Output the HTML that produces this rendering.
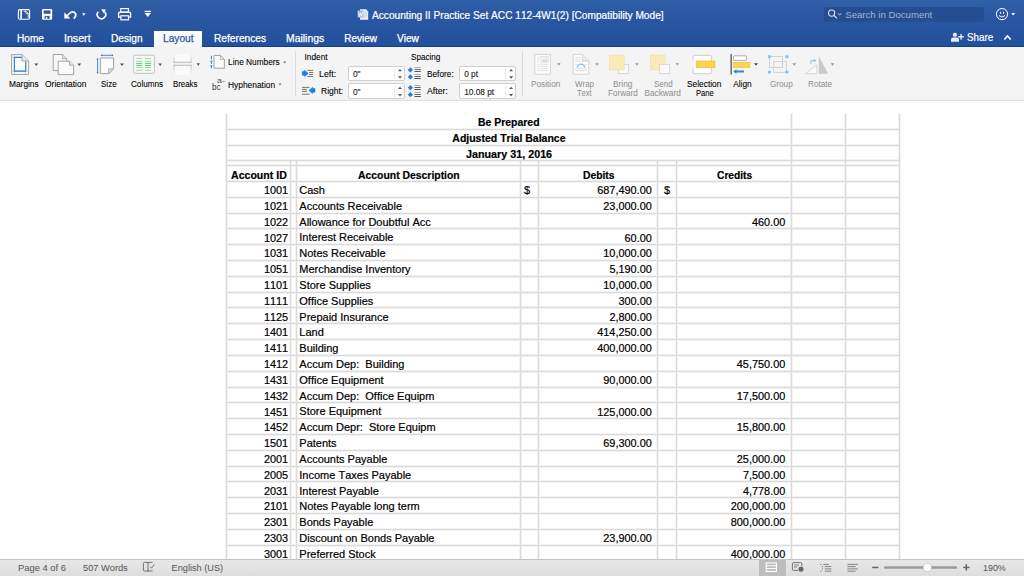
<!DOCTYPE html>
<html><head><meta charset="utf-8"><style>
html,body{margin:0;padding:0;}
body{width:1024px;height:576px;overflow:hidden;position:relative;background:#fff;font-family:"Liberation Sans",sans-serif;}
.t{position:absolute;white-space:nowrap;font-family:"Liberation Sans",sans-serif;font-kerning:none;}
.d{-webkit-text-stroke:0.2px #000;}
.rl{-webkit-text-stroke:0.08px currentColor;}
.r{position:absolute;}
svg{position:absolute;overflow:visible;}
</style></head><body>
<div class="r" style="left:0px;top:0px;width:1024px;height:47px;background:linear-gradient(#3060a8,#2a58a2 30%,#22509c);"></div>
<div class="r" style="left:0px;top:46px;width:1024px;height:1px;background:#123f8c;"></div>
<div class="r" style="left:154.3px;top:30.5px;width:47.9px;height:17px;background:linear-gradient(#fdfdfd,#f4f4f4);"></div>
<div class="t " style="left:372.40px;top:10.53px;font-size:10.0px;line-height:10.0px;color:#fff;transform:scaleX(1.0149);transform-origin:0 0;-webkit-text-stroke:0.2px #fff;">Accounting II Practice Set ACC 112-4W1(2) [Compatibility Mode]</div>
<div class="t " style="left:16.60px;top:33.73px;font-size:10px;line-height:10px;color:#fff;transform:scaleX(1.0085);transform-origin:0 0;-webkit-text-stroke:0.25px #fff;">Home</div>
<div class="t " style="left:63.70px;top:33.73px;font-size:10px;line-height:10px;color:#fff;transform:scaleX(1.0637);transform-origin:0 0;-webkit-text-stroke:0.25px #fff;">Insert</div>
<div class="t " style="left:111.20px;top:33.73px;font-size:10px;line-height:10px;color:#fff;transform:scaleX(1.0152);transform-origin:0 0;-webkit-text-stroke:0.25px #fff;">Design</div>
<div class="t " style="left:213.50px;top:33.73px;font-size:10px;line-height:10px;color:#fff;transform:scaleX(1.0189);transform-origin:0 0;-webkit-text-stroke:0.25px #fff;">References</div>
<div class="t " style="left:285.50px;top:33.73px;font-size:10px;line-height:10px;color:#fff;transform:scaleX(1.0415);transform-origin:0 0;-webkit-text-stroke:0.25px #fff;">Mailings</div>
<div class="t " style="left:344.20px;top:33.73px;font-size:10px;line-height:10px;color:#fff;-webkit-text-stroke:0.25px #fff;">Review</div>
<div class="t " style="left:397.00px;top:33.73px;font-size:10px;line-height:10px;color:#fff;transform:scaleX(1.0104);transform-origin:0 0;-webkit-text-stroke:0.25px #fff;">View</div>
<div class="t " style="left:162.70px;top:33.73px;font-size:10px;line-height:10px;color:#2b5aa6;transform:scaleX(1.0159);transform-origin:0 0;-webkit-text-stroke:0.25px #2b5aa6;">Layout</div>
<div class="t " style="left:967.40px;top:33.18px;font-size:10.3px;line-height:10.3px;color:#fff;transform:scaleX(0.9533);transform-origin:0 0;-webkit-text-stroke:0.2px #fff;">Share</div>
<div class="r" style="left:824px;top:7px;width:160px;height:15px;background:#244d92;border-radius:3px;"></div>
<div class="t " style="left:845.30px;top:10.07px;font-size:9.6px;line-height:9.6px;color:#a3b4d2;">Search in Document</div>
<div class="r" style="left:0px;top:47px;width:1024px;height:54px;background:#f4f4f4;"></div>
<div class="r" style="left:0px;top:99px;width:1024px;height:1px;background:#f1f1f1;"></div>
<div class="r" style="left:0px;top:100px;width:1024px;height:1px;background:#e0e0e0;"></div>
<div class="r" style="left:295px;top:51px;width:1px;height:45px;background:#dcdcdc;"></div>
<div class="r" style="left:522px;top:51px;width:1px;height:45px;background:#dcdcdc;"></div>
<div class="t rl" style="left:8.60px;top:79.97px;font-size:8.3px;line-height:8.3px;color:#000;transform:scaleX(1.0062);transform-origin:0 0;">Margins</div>
<div class="t rl" style="left:45.30px;top:79.97px;font-size:8.3px;line-height:8.3px;color:#000;transform:scaleX(1.0198);transform-origin:0 0;">Orientation</div>
<div class="t rl" style="left:100.60px;top:79.97px;font-size:8.3px;line-height:8.3px;color:#000;transform:scaleX(0.9662);transform-origin:0 0;">Size</div>
<div class="t rl" style="left:130.90px;top:79.97px;font-size:8.3px;line-height:8.3px;color:#000;transform:scaleX(0.9802);transform-origin:0 0;">Columns</div>
<div class="t rl" style="left:172.90px;top:79.97px;font-size:8.3px;line-height:8.3px;color:#000;transform:scaleX(0.9485);transform-origin:0 0;">Breaks</div>
<div class="t rl" style="left:228.10px;top:57.97px;font-size:8.3px;line-height:8.3px;color:#000;">Line Numbers</div>
<div class="t rl" style="left:228.10px;top:81.27px;font-size:8.3px;line-height:8.3px;color:#000;transform:scaleX(1.0107);transform-origin:0 0;">Hyphenation</div>
<div class="t rl" style="left:304.50px;top:52.77px;font-size:8.3px;line-height:8.3px;color:#000;">Indent</div>
<div class="t rl" style="left:410.70px;top:52.77px;font-size:8.3px;line-height:8.3px;color:#000;transform:scaleX(0.9769);transform-origin:0 0;">Spacing</div>
<div class="t rl" style="left:319.30px;top:70.32px;font-size:8.6px;line-height:8.6px;color:#000;transform:scaleX(1.0220);transform-origin:0 0;">Left:</div>
<div class="t rl" style="left:320.50px;top:87.12px;font-size:8.6px;line-height:8.6px;color:#000;transform:scaleX(0.9882);transform-origin:0 0;">Right:</div>
<div class="t rl" style="left:426.60px;top:70.32px;font-size:8.6px;line-height:8.6px;color:#000;transform:scaleX(0.9630);transform-origin:0 0;">Before:</div>
<div class="t rl" style="left:426.60px;top:87.12px;font-size:8.6px;line-height:8.6px;color:#000;transform:scaleX(1.0170);transform-origin:0 0;">After:</div>
<div class="t " style="left:530.90px;top:79.97px;font-size:8.3px;line-height:8.3px;color:#8c8c8c;">Position</div>
<div class="t " style="left:574.50px;top:79.97px;font-size:8.3px;line-height:8.3px;color:#8c8c8c;transform:scaleX(0.9582);transform-origin:0 0;">Wrap</div>
<div class="t " style="left:577.00px;top:88.77px;font-size:8.3px;line-height:8.3px;color:#8c8c8c;transform:scaleX(0.9107);transform-origin:0 0;">Text</div>
<div class="t " style="left:612.60px;top:79.97px;font-size:8.3px;line-height:8.3px;color:#8c8c8c;transform:scaleX(1.0064);transform-origin:0 0;">Bring</div>
<div class="t " style="left:607.50px;top:88.77px;font-size:8.3px;line-height:8.3px;color:#8c8c8c;transform:scaleX(0.9758);transform-origin:0 0;">Forward</div>
<div class="t " style="left:653.60px;top:79.97px;font-size:8.3px;line-height:8.3px;color:#8c8c8c;transform:scaleX(0.9596);transform-origin:0 0;">Send</div>
<div class="t " style="left:644.40px;top:88.77px;font-size:8.3px;line-height:8.3px;color:#8c8c8c;">Backward</div>
<div class="t rl" style="left:686.80px;top:79.97px;font-size:8.3px;line-height:8.3px;color:#000;transform:scaleX(1.0075);transform-origin:0 0;">Selection</div>
<div class="t rl" style="left:695.50px;top:88.77px;font-size:8.3px;line-height:8.3px;color:#000;transform:scaleX(0.9183);transform-origin:0 0;">Pane</div>
<div class="t rl" style="left:733.20px;top:79.97px;font-size:8.3px;line-height:8.3px;color:#000;">Align</div>
<div class="t " style="left:770.00px;top:79.97px;font-size:8.3px;line-height:8.3px;color:#8c8c8c;transform:scaleX(0.9841);transform-origin:0 0;">Group</div>
<div class="t " style="left:807.50px;top:79.97px;font-size:8.3px;line-height:8.3px;color:#8c8c8c;transform:scaleX(0.9856);transform-origin:0 0;">Rotate</div>
<div class="r" style="left:348px;top:65.6px;width:57.30000000000001px;height:15.900000000000006px;background:#fff;border:1px solid #cfcfcf;box-sizing:border-box;border-radius:2px;"></div>
<div class="t rl" style="left:353.00px;top:70.17px;font-size:8.3px;line-height:8.3px;color:#111;">0"</div>
<div class="r" style="left:348px;top:83.4px;width:57.30000000000001px;height:15.199999999999989px;background:#fff;border:1px solid #cfcfcf;box-sizing:border-box;border-radius:2px;"></div>
<div class="t rl" style="left:353.00px;top:87.97px;font-size:8.3px;line-height:8.3px;color:#111;">0"</div>
<div class="r" style="left:459.2px;top:65.6px;width:57.00000000000006px;height:15.900000000000006px;background:#fff;border:1px solid #cfcfcf;box-sizing:border-box;border-radius:2px;"></div>
<div class="t rl" style="left:464.20px;top:70.17px;font-size:8.3px;line-height:8.3px;color:#111;">0 pt</div>
<div class="r" style="left:459.2px;top:83.4px;width:57.00000000000006px;height:15.199999999999989px;background:#fff;border:1px solid #cfcfcf;box-sizing:border-box;border-radius:2px;"></div>
<div class="t rl" style="left:464.20px;top:87.97px;font-size:8.3px;line-height:8.3px;color:#111;">10.08 pt</div>
<div class="r" style="left:225px;top:128px;width:676px;height:3px;background:#f3f3f3;"></div>
<div class="r" style="left:225px;top:144px;width:676px;height:3px;background:#f3f3f3;"></div>
<div class="r" style="left:225px;top:159px;width:676px;height:3px;background:#f3f3f3;"></div>
<div class="r" style="left:225px;top:164px;width:676px;height:3px;background:#f3f3f3;"></div>
<div class="r" style="left:225px;top:180px;width:676px;height:3px;background:#f3f3f3;"></div>
<div class="r" style="left:225px;top:196px;width:676px;height:3px;background:#f3f3f3;"></div>
<div class="r" style="left:225px;top:212px;width:676px;height:3px;background:#f3f3f3;"></div>
<div class="r" style="left:225px;top:227px;width:676px;height:3px;background:#f3f3f3;"></div>
<div class="r" style="left:225px;top:243px;width:676px;height:3px;background:#f3f3f3;"></div>
<div class="r" style="left:225px;top:259px;width:676px;height:3px;background:#f3f3f3;"></div>
<div class="r" style="left:225px;top:275px;width:676px;height:3px;background:#f3f3f3;"></div>
<div class="r" style="left:225px;top:291px;width:676px;height:3px;background:#f3f3f3;"></div>
<div class="r" style="left:225px;top:306px;width:676px;height:3px;background:#f3f3f3;"></div>
<div class="r" style="left:225px;top:322px;width:676px;height:3px;background:#f3f3f3;"></div>
<div class="r" style="left:225px;top:338px;width:676px;height:3px;background:#f3f3f3;"></div>
<div class="r" style="left:225px;top:354px;width:676px;height:3px;background:#f3f3f3;"></div>
<div class="r" style="left:225px;top:370px;width:676px;height:3px;background:#f3f3f3;"></div>
<div class="r" style="left:225px;top:386px;width:676px;height:3px;background:#f3f3f3;"></div>
<div class="r" style="left:225px;top:401px;width:676px;height:3px;background:#f3f3f3;"></div>
<div class="r" style="left:225px;top:417px;width:676px;height:3px;background:#f3f3f3;"></div>
<div class="r" style="left:225px;top:433px;width:676px;height:3px;background:#f3f3f3;"></div>
<div class="r" style="left:225px;top:449px;width:676px;height:3px;background:#f3f3f3;"></div>
<div class="r" style="left:225px;top:465px;width:676px;height:3px;background:#f3f3f3;"></div>
<div class="r" style="left:225px;top:480px;width:676px;height:3px;background:#f3f3f3;"></div>
<div class="r" style="left:225px;top:496px;width:676px;height:3px;background:#f3f3f3;"></div>
<div class="r" style="left:225px;top:512px;width:676px;height:3px;background:#f3f3f3;"></div>
<div class="r" style="left:225px;top:528px;width:676px;height:3px;background:#f3f3f3;"></div>
<div class="r" style="left:225px;top:544px;width:676px;height:3px;background:#f3f3f3;"></div>
<div class="r" style="left:225px;top:113px;width:3px;height:447px;background:#f3f3f3;"></div>
<div class="r" style="left:790px;top:113px;width:3px;height:447px;background:#f3f3f3;"></div>
<div class="r" style="left:844px;top:113px;width:3px;height:447px;background:#f3f3f3;"></div>
<div class="r" style="left:898px;top:113px;width:3px;height:447px;background:#f3f3f3;"></div>
<div class="r" style="left:289px;top:159px;width:3px;height:401px;background:#f3f3f3;"></div>
<div class="r" style="left:295px;top:159px;width:3px;height:401px;background:#f3f3f3;"></div>
<div class="r" style="left:519px;top:159px;width:3px;height:401px;background:#f3f3f3;"></div>
<div class="r" style="left:537px;top:159px;width:3px;height:401px;background:#f3f3f3;"></div>
<div class="r" style="left:656px;top:159px;width:3px;height:401px;background:#f3f3f3;"></div>
<div class="r" style="left:675px;top:159px;width:3px;height:401px;background:#f3f3f3;"></div>
<div class="r" style="left:226px;top:129px;width:674px;height:1px;background:#dadada;"></div>
<div class="r" style="left:226px;top:145px;width:674px;height:1px;background:#dadada;"></div>
<div class="r" style="left:226px;top:160px;width:674px;height:1px;background:#dadada;"></div>
<div class="r" style="left:226px;top:165px;width:674px;height:1px;background:#dadada;"></div>
<div class="r" style="left:226px;top:181px;width:674px;height:1px;background:#dadada;"></div>
<div class="r" style="left:226px;top:197px;width:674px;height:1px;background:#dadada;"></div>
<div class="r" style="left:226px;top:213px;width:674px;height:1px;background:#dadada;"></div>
<div class="r" style="left:226px;top:228px;width:674px;height:1px;background:#dadada;"></div>
<div class="r" style="left:226px;top:244px;width:674px;height:1px;background:#dadada;"></div>
<div class="r" style="left:226px;top:260px;width:674px;height:1px;background:#dadada;"></div>
<div class="r" style="left:226px;top:276px;width:674px;height:1px;background:#dadada;"></div>
<div class="r" style="left:226px;top:292px;width:674px;height:1px;background:#dadada;"></div>
<div class="r" style="left:226px;top:307px;width:674px;height:1px;background:#dadada;"></div>
<div class="r" style="left:226px;top:323px;width:674px;height:1px;background:#dadada;"></div>
<div class="r" style="left:226px;top:339px;width:674px;height:1px;background:#dadada;"></div>
<div class="r" style="left:226px;top:355px;width:674px;height:1px;background:#dadada;"></div>
<div class="r" style="left:226px;top:371px;width:674px;height:1px;background:#dadada;"></div>
<div class="r" style="left:226px;top:387px;width:674px;height:1px;background:#dadada;"></div>
<div class="r" style="left:226px;top:402px;width:674px;height:1px;background:#dadada;"></div>
<div class="r" style="left:226px;top:418px;width:674px;height:1px;background:#dadada;"></div>
<div class="r" style="left:226px;top:434px;width:674px;height:1px;background:#dadada;"></div>
<div class="r" style="left:226px;top:450px;width:674px;height:1px;background:#dadada;"></div>
<div class="r" style="left:226px;top:466px;width:674px;height:1px;background:#dadada;"></div>
<div class="r" style="left:226px;top:481px;width:674px;height:1px;background:#dadada;"></div>
<div class="r" style="left:226px;top:497px;width:674px;height:1px;background:#dadada;"></div>
<div class="r" style="left:226px;top:513px;width:674px;height:1px;background:#dadada;"></div>
<div class="r" style="left:226px;top:529px;width:674px;height:1px;background:#dadada;"></div>
<div class="r" style="left:226px;top:545px;width:674px;height:1px;background:#dadada;"></div>
<div class="r" style="left:226px;top:114px;width:1px;height:446px;background:#dadada;"></div>
<div class="r" style="left:791px;top:114px;width:1px;height:446px;background:#dadada;"></div>
<div class="r" style="left:845px;top:114px;width:1px;height:446px;background:#dadada;"></div>
<div class="r" style="left:899px;top:114px;width:1px;height:446px;background:#dadada;"></div>
<div class="r" style="left:290px;top:160px;width:1px;height:400px;background:#dadada;"></div>
<div class="r" style="left:296px;top:160px;width:1px;height:400px;background:#dadada;"></div>
<div class="r" style="left:520px;top:160px;width:1px;height:400px;background:#dadada;"></div>
<div class="r" style="left:538px;top:160px;width:1px;height:400px;background:#dadada;"></div>
<div class="r" style="left:657px;top:160px;width:1px;height:400px;background:#dadada;"></div>
<div class="r" style="left:676px;top:160px;width:1px;height:400px;background:#dadada;"></div>
<div class="t d" style="left:478.25px;top:117.11px;font-size:10.5px;line-height:10.5px;color:#000;font-weight:bold;transform:scaleX(0.9942);transform-origin:0 0;">Be Prepared</div>
<div class="t d" style="left:452.30px;top:133.01px;font-size:10.5px;line-height:10.5px;color:#000;font-weight:bold;">Adjusted Trial Balance</div>
<div class="t d" style="left:465.95px;top:148.71px;font-size:10.5px;line-height:10.5px;color:#000;font-weight:bold;transform:scaleX(1.0243);transform-origin:0 0;">January 31, 2016</div>
<div class="t d" style="left:230.50px;top:169.71px;font-size:10.5px;line-height:10.5px;color:#000;font-weight:bold;transform:scaleX(1.0070);transform-origin:0 0;">Account ID</div>
<div class="t d" style="left:357.90px;top:169.71px;font-size:10.5px;line-height:10.5px;color:#000;font-weight:bold;transform:scaleX(0.9905);transform-origin:0 0;">Account Description</div>
<div class="t d" style="left:583.25px;top:169.71px;font-size:10.5px;line-height:10.5px;color:#000;font-weight:bold;transform:scaleX(0.9817);transform-origin:0 0;">Debits</div>
<div class="t d" style="left:716.60px;top:169.71px;font-size:10.5px;line-height:10.5px;color:#000;font-weight:bold;transform:scaleX(0.9731);transform-origin:0 0;">Credits</div>
<div class="t d" style="left:263.95px;top:185.09px;font-size:10.9px;line-height:10.9px;color:#000;">1001</div>
<div class="t d" style="left:299.30px;top:185.00px;font-size:11.0px;line-height:11.0px;color:#000;">Cash</div>
<div class="t d" style="left:597.25px;top:185.09px;font-size:10.9px;line-height:10.9px;color:#000;">687,490.00</div>
<div class="t d" style="left:263.95px;top:200.91px;font-size:10.9px;line-height:10.9px;color:#000;">1021</div>
<div class="t d" style="left:299.30px;top:200.82px;font-size:11.0px;line-height:11.0px;color:#000;">Accounts Receivable</div>
<div class="t d" style="left:603.31px;top:200.91px;font-size:10.9px;line-height:10.9px;color:#000;">23,000.00</div>
<div class="t d" style="left:263.95px;top:216.73px;font-size:10.9px;line-height:10.9px;color:#000;">1022</div>
<div class="t d" style="left:299.30px;top:216.64px;font-size:11.0px;line-height:11.0px;color:#000;">Allowance for Doubtful Acc</div>
<div class="t d" style="left:751.96px;top:216.73px;font-size:10.9px;line-height:10.9px;color:#000;">460.00</div>
<div class="t d" style="left:263.95px;top:232.55px;font-size:10.9px;line-height:10.9px;color:#000;">1027</div>
<div class="t d" style="left:299.30px;top:232.46px;font-size:11.0px;line-height:11.0px;color:#000;">Interest Receivable</div>
<div class="t d" style="left:624.53px;top:232.55px;font-size:10.9px;line-height:10.9px;color:#000;">60.00</div>
<div class="t d" style="left:263.95px;top:248.37px;font-size:10.9px;line-height:10.9px;color:#000;">1031</div>
<div class="t d" style="left:299.30px;top:248.28px;font-size:11.0px;line-height:11.0px;color:#000;">Notes Receivable</div>
<div class="t d" style="left:603.31px;top:248.37px;font-size:10.9px;line-height:10.9px;color:#000;">10,000.00</div>
<div class="t d" style="left:263.95px;top:264.19px;font-size:10.9px;line-height:10.9px;color:#000;">1051</div>
<div class="t d" style="left:299.30px;top:264.10px;font-size:11.0px;line-height:11.0px;color:#000;">Merchandise Inventory</div>
<div class="t d" style="left:609.38px;top:264.19px;font-size:10.9px;line-height:10.9px;color:#000;">5,190.00</div>
<div class="t d" style="left:263.95px;top:280.01px;font-size:10.9px;line-height:10.9px;color:#000;">1101</div>
<div class="t d" style="left:299.30px;top:279.92px;font-size:11.0px;line-height:11.0px;color:#000;">Store Supplies</div>
<div class="t d" style="left:603.31px;top:280.01px;font-size:10.9px;line-height:10.9px;color:#000;">10,000.00</div>
<div class="t d" style="left:263.95px;top:295.83px;font-size:10.9px;line-height:10.9px;color:#000;">1111</div>
<div class="t d" style="left:299.30px;top:295.74px;font-size:11.0px;line-height:11.0px;color:#000;">Office Supplies</div>
<div class="t d" style="left:618.46px;top:295.83px;font-size:10.9px;line-height:10.9px;color:#000;">300.00</div>
<div class="t d" style="left:263.95px;top:311.65px;font-size:10.9px;line-height:10.9px;color:#000;">1125</div>
<div class="t d" style="left:299.30px;top:311.56px;font-size:11.0px;line-height:11.0px;color:#000;">Prepaid Insurance</div>
<div class="t d" style="left:609.38px;top:311.65px;font-size:10.9px;line-height:10.9px;color:#000;">2,800.00</div>
<div class="t d" style="left:263.95px;top:327.47px;font-size:10.9px;line-height:10.9px;color:#000;">1401</div>
<div class="t d" style="left:299.30px;top:327.38px;font-size:11.0px;line-height:11.0px;color:#000;">Land</div>
<div class="t d" style="left:597.25px;top:327.47px;font-size:10.9px;line-height:10.9px;color:#000;">414,250.00</div>
<div class="t d" style="left:263.95px;top:343.29px;font-size:10.9px;line-height:10.9px;color:#000;">1411</div>
<div class="t d" style="left:299.30px;top:343.20px;font-size:11.0px;line-height:11.0px;color:#000;">Building</div>
<div class="t d" style="left:597.25px;top:343.29px;font-size:10.9px;line-height:10.9px;color:#000;">400,000.00</div>
<div class="t d" style="left:263.95px;top:359.11px;font-size:10.9px;line-height:10.9px;color:#000;">1412</div>
<div class="t d" style="left:299.30px;top:359.02px;font-size:11.0px;line-height:11.0px;color:#000;">Accum Dep: &nbsp;Building</div>
<div class="t d" style="left:736.81px;top:359.11px;font-size:10.9px;line-height:10.9px;color:#000;">45,750.00</div>
<div class="t d" style="left:263.95px;top:374.93px;font-size:10.9px;line-height:10.9px;color:#000;">1431</div>
<div class="t d" style="left:299.30px;top:374.84px;font-size:11.0px;line-height:11.0px;color:#000;">Office Equipment</div>
<div class="t d" style="left:603.31px;top:374.93px;font-size:10.9px;line-height:10.9px;color:#000;">90,000.00</div>
<div class="t d" style="left:263.95px;top:390.75px;font-size:10.9px;line-height:10.9px;color:#000;">1432</div>
<div class="t d" style="left:299.30px;top:390.66px;font-size:11.0px;line-height:11.0px;color:#000;">Accum Dep: &nbsp;Office Equipm</div>
<div class="t d" style="left:736.81px;top:390.75px;font-size:10.9px;line-height:10.9px;color:#000;">17,500.00</div>
<div class="t d" style="left:263.95px;top:406.57px;font-size:10.9px;line-height:10.9px;color:#000;">1451</div>
<div class="t d" style="left:299.30px;top:406.48px;font-size:11.0px;line-height:11.0px;color:#000;">Store Equipment</div>
<div class="t d" style="left:597.25px;top:406.57px;font-size:10.9px;line-height:10.9px;color:#000;">125,000.00</div>
<div class="t d" style="left:263.95px;top:422.39px;font-size:10.9px;line-height:10.9px;color:#000;">1452</div>
<div class="t d" style="left:299.30px;top:422.30px;font-size:11.0px;line-height:11.0px;color:#000;">Accum Depr: &nbsp;Store Equipm</div>
<div class="t d" style="left:736.81px;top:422.39px;font-size:10.9px;line-height:10.9px;color:#000;">15,800.00</div>
<div class="t d" style="left:263.95px;top:438.21px;font-size:10.9px;line-height:10.9px;color:#000;">1501</div>
<div class="t d" style="left:299.30px;top:438.12px;font-size:11.0px;line-height:11.0px;color:#000;">Patents</div>
<div class="t d" style="left:603.31px;top:438.21px;font-size:10.9px;line-height:10.9px;color:#000;">69,300.00</div>
<div class="t d" style="left:263.95px;top:454.03px;font-size:10.9px;line-height:10.9px;color:#000;">2001</div>
<div class="t d" style="left:299.30px;top:453.94px;font-size:11.0px;line-height:11.0px;color:#000;">Accounts Payable</div>
<div class="t d" style="left:736.81px;top:454.03px;font-size:10.9px;line-height:10.9px;color:#000;">25,000.00</div>
<div class="t d" style="left:263.95px;top:469.85px;font-size:10.9px;line-height:10.9px;color:#000;">2005</div>
<div class="t d" style="left:299.30px;top:469.76px;font-size:11.0px;line-height:11.0px;color:#000;">Income Taxes Payable</div>
<div class="t d" style="left:742.88px;top:469.85px;font-size:10.9px;line-height:10.9px;color:#000;">7,500.00</div>
<div class="t d" style="left:263.95px;top:485.67px;font-size:10.9px;line-height:10.9px;color:#000;">2031</div>
<div class="t d" style="left:299.30px;top:485.58px;font-size:11.0px;line-height:11.0px;color:#000;">Interest Payable</div>
<div class="t d" style="left:742.88px;top:485.67px;font-size:10.9px;line-height:10.9px;color:#000;">4,778.00</div>
<div class="t d" style="left:263.95px;top:501.49px;font-size:10.9px;line-height:10.9px;color:#000;">2101</div>
<div class="t d" style="left:299.30px;top:501.40px;font-size:11.0px;line-height:11.0px;color:#000;">Notes Payable long term</div>
<div class="t d" style="left:730.75px;top:501.49px;font-size:10.9px;line-height:10.9px;color:#000;">200,000.00</div>
<div class="t d" style="left:263.95px;top:517.31px;font-size:10.9px;line-height:10.9px;color:#000;">2301</div>
<div class="t d" style="left:299.30px;top:517.22px;font-size:11.0px;line-height:11.0px;color:#000;">Bonds Payable</div>
<div class="t d" style="left:730.75px;top:517.31px;font-size:10.9px;line-height:10.9px;color:#000;">800,000.00</div>
<div class="t d" style="left:263.95px;top:533.13px;font-size:10.9px;line-height:10.9px;color:#000;">2303</div>
<div class="t d" style="left:299.30px;top:533.04px;font-size:11.0px;line-height:11.0px;color:#000;">Discount on Bonds Payable</div>
<div class="t d" style="left:603.31px;top:533.13px;font-size:10.9px;line-height:10.9px;color:#000;">23,900.00</div>
<div class="t d" style="left:263.95px;top:548.95px;font-size:10.9px;line-height:10.9px;color:#000;">3001</div>
<div class="t d" style="left:299.30px;top:548.86px;font-size:11.0px;line-height:11.0px;color:#000;">Preferred Stock</div>
<div class="t d" style="left:730.75px;top:548.95px;font-size:10.9px;line-height:10.9px;color:#000;">400,000.00</div>
<div class="t d" style="left:524.00px;top:185.09px;font-size:10.9px;line-height:10.9px;color:#000;">$</div>
<div class="t d" style="left:664.00px;top:185.09px;font-size:10.9px;line-height:10.9px;color:#000;">$</div>
<div class="r" style="left:0px;top:559px;width:1024px;height:17px;background:linear-gradient(#e8e8e8,#dedede);"></div>
<div class="r" style="left:0px;top:559px;width:1024px;height:1px;background:#c2c2c2;"></div>
<div class="t " style="left:18.30px;top:563.81px;font-size:9.2px;line-height:9.2px;color:#555;transform:scaleX(1.0222);transform-origin:0 0;">Page 4 of 6</div>
<div class="t " style="left:83.00px;top:563.81px;font-size:9.2px;line-height:9.2px;color:#555;transform:scaleX(1.0071);transform-origin:0 0;">507 Words</div>
<div class="t " style="left:171.60px;top:563.81px;font-size:9.2px;line-height:9.2px;color:#555;">English (US)</div>
<div class="t " style="left:982.60px;top:563.81px;font-size:9.2px;line-height:9.2px;color:#555;transform:scaleX(0.9690);transform-origin:0 0;">190%</div>
<div class="r" style="left:758.5px;top:560px;width:27.2px;height:16px;background:#bdbdbd;"></div>
<div class="t " style="left:216.90px;top:77.19px;font-size:7.8px;line-height:7.8px;color:#555;transform:scaleX(1.1248);transform-origin:0 0;">a-</div>
<div class="t " style="left:211.70px;top:83.22px;font-size:9.3px;line-height:9.3px;color:#333;transform:scaleX(0.8654);transform-origin:0 0;">bc</div>
<svg style="left:0;top:0" width="1024" height="576" viewBox="0 0 1024 576"><rect x="18.4" y="9.6" width="11.2" height="9.6" rx="1.2" fill="none" stroke="#fff" stroke-width="1.1"/><rect x="20.3" y="10" width="1.7" height="8.8" fill="#fff"/><path d="M23.8 11.2 L26 11.2 L28.2 13.5 L28.2 17.8" fill="none" stroke="#fff" stroke-width="0.9"/><path d="M26 11.2 L26 13.5 L28.2 13.5" fill="none" stroke="#fff" stroke-width="0.7"/><rect x="42" y="9" width="10.2" height="10.7" rx="1.2" fill="#fff"/><rect x="43.7" y="10.4" width="6.8" height="3.4" fill="#2a58a2"/><rect x="44.6" y="15.9" width="5" height="3" fill="#2a58a2"/><rect x="45.8" y="16.8" width="1.5" height="2.1" fill="#fff"/><path d="M66.2 16.4 L70.5 12.6 Q73.6 10.8 75.4 13.4 Q76.6 16 74.2 18" fill="none" stroke="#fff" stroke-width="1.7" stroke-linecap="round"/><path d="M64.3 12.2 L64.3 18.4 L70.4 18.4 Z" fill="#fff"/><path d="M82 13.2 L85.6 13.2 L83.8 15.8 Z" fill="#fff"/><path d="M104.8 12 A4.2 4.2 0 1 1 98.3 11.8" fill="none" stroke="#fff" stroke-width="1.6"/><path d="M101.2 9.3 L105.8 9.5 L103.9 13.4 Z" fill="#fff"/><rect x="120.8" y="8.6" width="7.6" height="3.6" fill="none" stroke="#fff" stroke-width="1.2"/><path d="M120.6 17.2 L118.6 17.2 L118.6 13.6 Q118.6 12.2 120 12.2 L129.2 12.2 Q130.6 12.2 130.6 13.6 L130.6 17.2 L128.6 17.2" fill="none" stroke="#fff" stroke-width="1.3"/><rect x="120.9" y="15.8" width="7.6" height="4" fill="none" stroke="#fff" stroke-width="1.2"/><rect x="144.6" y="10.8" width="6.3" height="1.3" fill="#fff"/><path d="M144.6 13 L150.9 13 L147.75 16.9 Z" fill="#fff"/><path d="M360 9.2 L366 9.2 L368.2 11.4 L368.2 19.8 L360 19.8 Z" fill="#eef2f8"/><g stroke="#b9c6dc" stroke-width="0.7"><line x1="363.5" y1="12.2" x2="367.2" y2="12.2"/><line x1="363.5" y1="13.8" x2="367.2" y2="13.8"/><line x1="363.5" y1="15.4" x2="367.2" y2="15.4"/><line x1="363.5" y1="17" x2="367.2" y2="17"/></g><rect x="357.6" y="10.4" width="5.8" height="7.2" fill="#9fb4d8"/><path d="M358.3 11.6 L359.4 16.6 L360.5 12.8 L361.6 16.6 L362.7 11.6" fill="none" stroke="#fff" stroke-width="0.8"/><circle cx="831.6" cy="13.1" r="3.1" fill="none" stroke="#d9e1ee" stroke-width="1.1"/><line x1="833.9" y1="15.5" x2="836.6" y2="17.9" stroke="#d9e1ee" stroke-width="1.2" stroke-linecap="round"/><path d="M838 13.4 L839.7 14.9 L841.4 13.4" fill="none" stroke="#d9e1ee" stroke-width="0.9"/><circle cx="1002" cy="14.1" r="5.6" fill="none" stroke="#fff" stroke-width="1"/><rect x="1000.2" y="11.8" width="0.9" height="2" fill="#fff"/><rect x="1003" y="11.8" width="0.9" height="2" fill="#fff"/><path d="M999 15.6 Q1002 18.6 1005 15.6" fill="none" stroke="#fff" stroke-width="1"/><path d="M1011.2 12.9 L1015.1 12.9 L1013.15 15.4 Z" fill="#fff"/><circle cx="954.9" cy="34.8" r="2.1" fill="#e8edf5"/><path d="M951 41.8 L951 39.6 Q951 37.4 953.2 37.4 L956.8 37.4 Q959 37.4 959 39.6 L959 41.8 Z" fill="#e8edf5"/><rect x="958.2" y="36.1" width="5.7" height="1.4" fill="#e8edf5"/><rect x="960.35" y="33.9" width="1.4" height="5.8" fill="#e8edf5"/><path d="M1004.3 39.5 L1007.5 36 L1010.7 39.5" fill="none" stroke="#fff" stroke-width="1.7"/><path d="M11.6 54.6 L22 54.6 L28.6 61 L28.6 74.4 L11.6 74.4 Z" fill="#fbfbfb" stroke="#9a9a9a" stroke-width="0.9"/><path d="M22 54.6 L22 61 L28.6 61" fill="#e6e6e6" stroke="#9a9a9a" stroke-width="0.8"/><g stroke="#7fb2e5" stroke-width="0.6"><line x1="14.4" y1="54.8" x2="14.4" y2="74.2"/><line x1="25.7" y1="61" x2="25.7" y2="74.2"/><line x1="11.8" y1="71.1" x2="28.4" y2="71.1"/><line x1="11.8" y1="57.4" x2="22" y2="57.4"/></g><path d="M22 57.4 L14.4 57.4 L14.4 71.1 L25.7 71.1 L25.7 61.5" fill="none" stroke="#2f7fd6" stroke-width="1.1"/><path d="M34.3 63.4 L38.2 63.4 L36.25 66 Z" fill="#555"/><path d="M53.2 54.5 L62.6 54.5 L66.8 58.7 L66.8 70.6 L53.2 70.6 Z" fill="#f7f7f7" stroke="#9a9a9a" stroke-width="0.9"/><path d="M62.6 54.5 L62.6 58.7 L66.8 58.7" fill="#e6e6e6" stroke="#9a9a9a" stroke-width="0.8"/><path d="M58.2 61.2 L69.6 61.2 L73.6 65.2 L73.6 74.6 L58.2 74.6 Z" fill="#fbfbfb" stroke="#9a9a9a" stroke-width="0.9"/><path d="M69.6 61.2 L69.6 65.2 L73.6 65.2" fill="#e6e6e6" stroke="#9a9a9a" stroke-width="0.8"/><path d="M77.3 63.4 L81.2 63.4 L79.25 66 Z" fill="#555"/><path d="M100.4 58 L113.6 58 L113.6 68.8 L108.6 73.6 L100.4 73.6 Z" fill="#fbfbfb" stroke="#9a9a9a" stroke-width="0.9"/><path d="M113.6 68.8 L108.6 68.8 L108.6 73.6 Z" fill="#e4e4e4" stroke="#9a9a9a" stroke-width="0.7"/><g stroke="#2f7fd6" stroke-width="0.9" fill="#2f7fd6"><line x1="101" y1="55.3" x2="113" y2="55.3"/><line x1="97.6" y1="58.4" x2="97.6" y2="73.2"/></g><path d="M100.6 55.3 L102.2 54.2 L102.2 56.4 Z M113.4 55.3 L111.8 54.2 L111.8 56.4 Z M97.6 58 L96.5 59.6 L98.7 59.6 Z M97.6 73.6 L96.5 72 L98.7 72 Z" fill="#2f7fd6"/><path d="M120 63.6 L124 63.6 L122.0 66 Z" fill="#555"/><rect x="133.6" y="55.2" width="20.8" height="18.2" rx="1.6" fill="#f9f9f9" stroke="#bdbdbd" stroke-width="0.9"/><g stroke="#8fd79a" stroke-width="0.9"><line x1="136.2" y1="58.4" x2="142.2" y2="58.4"/><line x1="145" y1="58.4" x2="151.2" y2="58.4"/></g><g stroke="#8fd79a" stroke-width="0.9"><line x1="136.2" y1="61.2" x2="142.2" y2="61.2"/><line x1="145" y1="61.2" x2="151.2" y2="61.2"/></g><g stroke="#3fbf55" stroke-width="0.9"><line x1="136.2" y1="63.3" x2="142.2" y2="63.3"/><line x1="145" y1="63.3" x2="151.2" y2="63.3"/></g><g stroke="#3fbf55" stroke-width="0.9"><line x1="136.2" y1="65.4" x2="142.2" y2="65.4"/><line x1="145" y1="65.4" x2="151.2" y2="65.4"/></g><g stroke="#8fd79a" stroke-width="0.9"><line x1="136.2" y1="67.5" x2="142.2" y2="67.5"/><line x1="145" y1="67.5" x2="151.2" y2="67.5"/></g><g stroke="#8fd79a" stroke-width="0.9"><line x1="136.2" y1="70.4" x2="142.2" y2="70.4"/><line x1="145" y1="70.4" x2="151.2" y2="70.4"/></g><path d="M158.4 63.6 L161.9 63.6 L160.15 66 Z" fill="#555"/><defs><linearGradient id="bfu" x1="0" y1="0" x2="0" y2="1"><stop offset="0" stop-color="#b5b5b5" stop-opacity="0"/><stop offset="1" stop-color="#b5b5b5"/></linearGradient><linearGradient id="bfd" x1="0" y1="0" x2="0" y2="1"><stop offset="0" stop-color="#b5b5b5"/><stop offset="1" stop-color="#b5b5b5" stop-opacity="0"/></linearGradient></defs><rect x="174" y="54" width="17" height="8.2" fill="#fafafa"/><rect x="174" y="65.2" width="17" height="9.8" fill="#fafafa"/><rect x="173.6" y="54" width="0.9" height="8.6" fill="url(#bfu)"/><rect x="190.6" y="54" width="0.9" height="8.6" fill="url(#bfu)"/><rect x="173.6" y="61.8" width="17.9" height="0.9" fill="#b5b5b5"/><rect x="173.6" y="64.8" width="0.9" height="10.2" fill="url(#bfd)"/><rect x="190.6" y="64.8" width="0.9" height="10.2" fill="url(#bfd)"/><rect x="173.6" y="64.8" width="17.9" height="0.9" fill="#b5b5b5"/><path d="M196.7 63.2 L199.9 63.2 L198.3 66 Z" fill="#555"/><path d="M214 55.4 L220.4 55.4 L224.4 59.4 L224.4 68.2 L214 68.2 Z" fill="#fbfbfb" stroke="#9a9a9a" stroke-width="0.9"/><path d="M220.4 55.4 L220.4 59.4 L224.4 59.4" fill="none" stroke="#9a9a9a" stroke-width="0.7"/><g fill="#3a8ee0"><rect x="210.9" y="55.8" width="1.1" height="3.4"/><rect x="210.3" y="60.6" width="2.2" height="1"/><rect x="210.9" y="61.4" width="1.1" height="2.4"/><rect x="210.3" y="65.2" width="2.2" height="1"/><rect x="210.9" y="66" width="1.1" height="2.2"/></g><g stroke="#c8d8ea" stroke-width="0.8"><line x1="213" y1="57.6" x2="214.6" y2="57.6"/><line x1="213" y1="62.6" x2="214.6" y2="62.6"/><line x1="213" y1="67" x2="214.6" y2="67"/></g><path d="M283 61.6 L286.2 61.6 L284.6 63.6 Z" fill="#777"/><path d="M278.6 83.6 L281.5 83.6 L280.05 85.6 Z" fill="#777"/><path d="M302.2 71.6 L304.6 71.6 L304.6 70.2 L308.2 73.4 L304.6 76.6 L304.6 75.2 L302.2 75.2 Z" fill="#1d7fe0" stroke="#1d7fe0" stroke-width="0.6" stroke-linejoin="round"/><g stroke="#555" stroke-width="0.8"><line x1="307.4" y1="70.4" x2="313.2" y2="70.4"/><line x1="309" y1="72.5" x2="313.2" y2="72.5"/><line x1="309" y1="74.5" x2="313.2" y2="74.5"/><line x1="307.4" y1="76.5" x2="313.2" y2="76.5"/></g><g stroke="#555" stroke-width="0.8"><line x1="302" y1="87.4" x2="309.5" y2="87.4"/><line x1="302" y1="89.4" x2="307" y2="89.4"/><line x1="302" y1="91.4" x2="307" y2="91.4"/><line x1="302" y1="94.2" x2="309.5" y2="94.2"/></g><path d="M315 88.6 L312.6 88.6 L312.6 87.2 L309 90.4 L312.6 93.6 L312.6 92.2 L315 92.2 Z" fill="#1d7fe0" stroke="#1d7fe0" stroke-width="0.6" stroke-linejoin="round"/><path d="M410.4 67.30000000000001 L413 69.9 L410.4 72.5 L407.8 69.9 Z" fill="#1d7fe0"/><path d="M410.4 74.30000000000001 L413 76.9 L410.4 79.5 L407.8 76.9 Z" fill="#1d7fe0"/><g fill="#555"><rect x="414.5" y="67" width="6.3" height="0.8" fill="#999"/><rect x="414.5" y="69" width="6.3" height="0.9"/><rect x="414.5" y="71" width="6.3" height="1"/><rect x="414.5" y="74" width="6.3" height="0.8" fill="#999"/><rect x="414.5" y="76" width="6.3" height="0.9"/><rect x="414.5" y="78" width="6.3" height="1"/></g><path d="M410.4 85.10000000000001 L413 87.7 L410.4 90.3 L407.8 87.7 Z" fill="#1d7fe0"/><path d="M410.4 92.10000000000001 L413 94.7 L410.4 97.3 L407.8 94.7 Z" fill="#1d7fe0"/><g fill="#555"><rect x="414.5" y="85" width="6.3" height="0.8" fill="#999"/><rect x="414.5" y="87" width="6.3" height="0.9"/><rect x="414.5" y="89" width="6.3" height="1"/><rect x="414.5" y="92" width="6.3" height="0.8" fill="#999"/><rect x="414.5" y="94" width="6.3" height="0.9"/><rect x="414.5" y="96" width="6.3" height="1"/></g><line x1="394.4" y1="67.89999999999999" x2="394.4" y2="79.3" stroke="#e2e2e2" stroke-width="0.8"/><path d="M398.0 71.3 L402.0 71.3 L400.0 68.89999999999999 Z M398.0 76.3 L402.0 76.3 L400.0 78.7 Z" fill="#555"/><line x1="394.4" y1="85.69999999999999" x2="394.4" y2="97.1" stroke="#e2e2e2" stroke-width="0.8"/><path d="M398.0 89.1 L402.0 89.1 L400.0 86.69999999999999 Z M398.0 94.1 L402.0 94.1 L400.0 96.5 Z" fill="#555"/><line x1="505.5" y1="67.89999999999999" x2="505.5" y2="79.3" stroke="#e2e2e2" stroke-width="0.8"/><path d="M509.1 71.3 L513.1 71.3 L511.1 68.89999999999999 Z M509.1 76.3 L513.1 76.3 L511.1 78.7 Z" fill="#555"/><line x1="505.5" y1="85.69999999999999" x2="505.5" y2="97.1" stroke="#e2e2e2" stroke-width="0.8"/><path d="M509.1 89.1 L513.1 89.1 L511.1 86.69999999999999 Z M509.1 94.1 L513.1 94.1 L511.1 96.5 Z" fill="#555"/><rect x="534.8" y="54.4" width="15.6" height="19.8" fill="#fdfdfd" stroke="#cfcfcf" stroke-width="0.9"/><rect x="540.8" y="56.4" width="7.8" height="5.8" fill="#f2f2f2" stroke="#d6d6d6" stroke-width="0.6"/><path d="M541.8 61.6 L543.6 59.2 L545 60.6 L546.4 59.4 L547.8 61.6 Z" fill="#b9e0b9"/><circle cx="546.6" cy="58" r="0.7" fill="#f5d36a"/><g stroke="#dadada" stroke-width="0.8"><line x1="537" y1="57.4" x2="539.4" y2="57.4"/><line x1="537" y1="59.4" x2="539.4" y2="59.4"/><line x1="537" y1="61.4" x2="539.4" y2="61.4"/><line x1="537" y1="64.2" x2="548.6" y2="64.2"/><line x1="537" y1="66.3" x2="548.6" y2="66.3"/><line x1="537" y1="68.4" x2="548.6" y2="68.4"/><line x1="537" y1="70.5" x2="548.6" y2="70.5"/></g><path d="M557 63.2 L560.7 63.2 L558.85 65.6 Z" fill="#999"/><path d="M573.2 54.4 L582.6 54.4 L588.8 60.8 L588.8 74.2 L573.2 74.2 Z" fill="#fdfdfd" stroke="#cfcfcf" stroke-width="0.9"/><path d="M582.6 54.4 L582.6 60.8 L588.8 60.8" fill="#ececec" stroke="#cfcfcf" stroke-width="0.8"/><g stroke="#dadada" stroke-width="0.8"><line x1="575" y1="57.4" x2="581.4" y2="57.4"/><line x1="575" y1="59.4" x2="581.4" y2="59.4"/><line x1="575" y1="61.4" x2="587" y2="61.4"/><line x1="575" y1="64.4" x2="577" y2="64.4"/><line x1="585" y1="64.4" x2="587" y2="64.4"/><line x1="575" y1="68.4" x2="587" y2="68.4"/><line x1="575" y1="70.5" x2="587" y2="70.5"/></g><path d="M577.4 67.4 A3.6 3.2 0 0 1 584.6 67.4" fill="none" stroke="#8ec4f2" stroke-width="1.5"/><path d="M595.2 63.2 L598.9 63.2 L597.05 65.6 Z" fill="#999"/><rect x="618.5" y="64.3" width="10.2" height="9.4" fill="#f9f9f9" stroke="#d2d2d2" stroke-width="0.8"/><rect x="609.4" y="55.2" width="14.8" height="14.6" fill="#f8ebb8" stroke="#f1df9f" stroke-width="0.7"/><path d="M635 63.2 L638.7 63.2 L636.85 65.6 Z" fill="#999"/><rect x="650.4" y="55.2" width="14.6" height="14.6" fill="#f8ebb8" stroke="#f1df9f" stroke-width="0.7"/><rect x="659.5" y="64.3" width="10.2" height="9.4" fill="#f9f9f9" stroke="#d2d2d2" stroke-width="0.8"/><path d="M675.6 63.2 L679 63.2 L677.3 65.6 Z" fill="#999"/><rect x="693" y="55.4" width="18.6" height="18.2" rx="1.5" fill="#fff" stroke="#c8c8c8" stroke-width="0.9"/><rect x="692" y="60.4" width="3" height="8" fill="#f5f5f5"/><rect x="696.2" y="61" width="18.8" height="6.6" fill="#fdd44e" stroke="#eebd2a" stroke-width="0.7"/><rect x="730.4" y="54.1" width="1.5" height="20.4" fill="#6a6a6a"/><rect x="733.5" y="55.8" width="13" height="4.6" rx="1.2" fill="#fff" stroke="#9a9a9a" stroke-width="0.8"/><rect x="733.5" y="62.3" width="16.4" height="5" fill="#fdd44e" stroke="#eebd2a" stroke-width="0.6"/><path d="M733.2 71.5 L736.4 69.2 L736.4 70.6 L744 70.6 L744 72.4 L736.4 72.4 L736.4 73.8 Z" fill="#2d86de"/><path d="M754 63.3 L758.1 63.3 L756.05 65.8 Z" fill="#444"/><g fill="none" stroke="#c9c9c9" stroke-width="0.8"><rect x="769.4" y="56.4" width="13" height="11"/><rect x="773.8" y="61.5" width="12.8" height="10.8"/></g><g fill="#8ec2ef"><circle cx="769.4" cy="56.7" r="1.7"/><circle cx="786.9" cy="56.7" r="1.7"/><circle cx="769.4" cy="72.1" r="1.7"/><circle cx="786.9" cy="72.1" r="1.7"/></g><path d="M792.3 63.3 L796.2 63.3 L794.25 65.8 Z" fill="#999"/><path d="M805.4 73.6 L816.8 64.9 L816.8 73.6 Z" fill="#fafafa" stroke="#cfcfcf" stroke-width="0.8"/><path d="M818.8 56.3 L828.1 73.8 L818.8 73.8 Z" fill="#c9c9c9"/><path d="M810.8 63.8 L810.8 62 Q810.8 60.6 812.2 60.6 L814.6 60.6" fill="none" stroke="#8ec2ef" stroke-width="1.1"/><path d="M814.2 58.6 L816.4 60.6 L814.2 62.6 Z" fill="#8ec2ef"/><path d="M830.7 63.3 L834.4 63.3 L832.55 65.8 Z" fill="#999"/><path d="M148 562.4 L144.4 562.4 Q143.4 562.4 143.4 563.4 L143.4 570 Q143.4 571 144.4 571 L152.6 571 M148 562.4 L152.6 562.4 M148 562.4 L148 572" fill="none" stroke="#6a6a6a" stroke-width="0.9"/><path d="M150.2 566.6 L151.5 568.2 L154.4 564.4" fill="none" stroke="#6a6a6a" stroke-width="0.9"/><rect x="766.2" y="562.9" width="10.2" height="8.6" fill="none" stroke="#fff" stroke-width="1.1"/><g stroke="#fff" stroke-width="1"><line x1="766.2" y1="565.8" x2="776.4" y2="565.8"/><line x1="766.2" y1="568.6" x2="776.4" y2="568.6"/></g><rect x="792.4" y="562.6" width="9.4" height="7.8" rx="1" fill="none" stroke="#666" stroke-width="0.9"/><g stroke="#666" stroke-width="0.8"><line x1="794" y1="565" x2="799" y2="565"/><line x1="794" y1="567" x2="797" y2="567"/></g><circle cx="801" cy="569.2" r="3" fill="#666" stroke="#e2e2e2" stroke-width="0.8"/><g stroke="#777" stroke-width="0.9"><line x1="823.4" y1="564.4" x2="828.8" y2="564.4"/><line x1="824.8" y1="566.6" x2="831.4" y2="566.6"/><line x1="824.8" y1="568.9" x2="831.4" y2="568.9"/><line x1="824.8" y1="571.2" x2="831.4" y2="571.2"/></g><g fill="#777"><rect x="820.3" y="564" width="1" height="1"/><rect x="822" y="566.2" width="1" height="1"/><rect x="822" y="568.5" width="1" height="1"/><rect x="820.3" y="570.8" width="1" height="1"/></g><g stroke="#777" stroke-width="0.9"><line x1="847.4" y1="564.4" x2="857.8" y2="564.4"/><line x1="847.4" y1="566.6" x2="855.6" y2="566.6"/><line x1="847.4" y1="568.9" x2="857.8" y2="568.9"/><line x1="847.4" y1="571.2" x2="855.6" y2="571.2"/></g><rect x="872.2" y="566.7" width="6.2" height="1.5" fill="#666"/><rect x="884" y="566.2" width="73" height="2.6" rx="1.3" fill="#9a9a9a"/><rect x="963.2" y="566.7" width="6.3" height="1.5" fill="#666"/><rect x="965.6" y="564.3" width="1.5" height="6.3" fill="#666"/><circle cx="927.3" cy="567.5" r="4.1" fill="#fff" stroke="#b5b5b5" stroke-width="0.6"/></svg>
</body></html>
